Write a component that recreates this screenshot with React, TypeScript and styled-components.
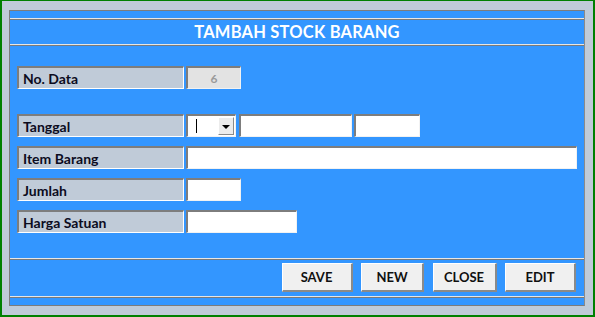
import React from 'react';
import styled, { createGlobalStyle } from 'styled-components';

const GlobalStyle = createGlobalStyle`
  html, body {
    margin: 0;
    padding: 0;
    background: #c0cbd8;
  }
  * {
    box-sizing: border-box;
  }
`;

const Window = styled.div`
  width: 595px;
  height: 317px;
  background-color: #c0cbd8;
  border: solid 2px #008000;
  border-top-width: 1px;
  padding: 9px 0 0 7px;
  font-family: Lato, 'Open Sans', sans-serif;
`;

const Panel = styled.div`
  width: 576px;
  height: 296px;
  display: flex;
  flex-direction: column;
  background-color: #3396ff;
  border: solid 1px #7c7c7c;
  border-right-color: #8a8a8a;
`;

const Strip = styled.div`
  height: 7px;
  flex: none;
`;

const Groove = styled.div`
  height: 2px;
  flex: none;
  border-top: solid 1px #e6e6e6;
  border-bottom: solid 1px #7a7a7a;
`;

const Title = styled.div`
  height: 24px;
  flex: none;
  display: flex;
  align-items: center;
  justify-content: center;
  color: #ffffff;
  font-size: 16.5px;
  font-weight: 700;
  letter-spacing: 0.2px;
`;

const Body = styled.div`
  flex: 1;
  padding: 20px 0 0 7px;
  display: flex;
  flex-direction: column;
  gap: 9px;
`;

const Row = styled.div<{ $spaceAfter?: number }>`
  display: flex;
  gap: 2px;
  height: 23px;
  margin-bottom: ${(props) => props.$spaceAfter ?? 0}px;
`;

const Label = styled.div`
  width: 167px;
  display: flex;
  align-items: center;
  padding-left: 4px;
  background-color: #c0cbd8;
  border-top: solid 2px #7d7d7d;
  border-left: solid 2px #7d7d7d;
  border-bottom: solid 1px #ffffff;
  border-right: solid 1px #ffffff;
  color: #0c0c1e;
  font-size: 14px;
  font-weight: 700;
`;

const Field = styled.div<{ $width: number; $disabled?: boolean; $gapBefore?: number }>`
  width: ${(props) => props.$width}px;
  margin-left: ${(props) => props.$gapBefore ?? 0}px;
  display: flex;
  align-items: center;
  justify-content: center;
  background-color: ${(props) => (props.$disabled ? '#e3e3e3' : '#ffffff')};
  border-top: solid 2px #7d7d7d;
  border-left: solid 2px #7d7d7d;
  border-bottom: solid 1px #f2f2f2;
  border-right: solid 1px #f2f2f2;
  color: #9a9a9a;
  font-size: 12px;
  font-weight: 700;
`;

const Combo = styled(Field)`
  justify-content: space-between;
  padding: 1px 1px 1px 8px;
`;

const Caret = styled.span`
  width: 1px;
  height: 14px;
  background-color: #000;
`;

const DropButton = styled.span`
  width: 16px;
  height: 100%;
  display: flex;
  align-items: center;
  justify-content: center;
  background-color: #ececec;
  border-top: solid 1px #ffffff;
  border-left: solid 1px #ffffff;
  border-bottom: solid 1px #8a8a8a;
  border-right: solid 1px #8a8a8a;

  &::after {
    content: '';
    border-left: solid 4px transparent;
    border-right: solid 4px transparent;
    border-top: solid 4px #000;
    margin-top: 1px;
  }
`;

const Footer = styled.div`
  height: 36px;
  flex: none;
  display: flex;
  justify-content: flex-end;
  gap: 8.5px;
  padding: 3px 8px 0 0;
`;

const Button = styled.button<{ $width: number }>`
  width: ${(props) => props.$width}px;
  height: 29px;
  padding: 0;
  background-color: #f0f0f0;
  border-top: solid 1px #ffffff;
  border-left: solid 1px #ffffff;
  border-bottom: solid 2px #8a8a8a;
  border-right: solid 2px #8a8a8a;
  font-family: Lato, 'Open Sans', sans-serif;
  font-size: 13px;
  font-weight: 700;
  color: #101010;
`;

const buttons = [
  { id: 'save', text: 'SAVE', width: 71 },
  { id: 'new', text: 'NEW', width: 63 },
  { id: 'close', text: 'CLOSE', width: 64 },
  { id: 'edit', text: 'EDIT', width: 71 },
];

export default function App() {
  return (
    <>
      <GlobalStyle />
      <Window>
        <Panel>
          <Strip />
          <Groove />
          <Title>TAMBAH STOCK BARANG</Title>
          <Groove />
          <Body>
            <Row $spaceAfter={16}>
              <Label>No. Data</Label>
              <Field $width={55} $disabled>
                6
              </Field>
            </Row>
            <Row>
              <Label>Tanggal</Label>
              <Combo $width={50}>
                <Caret />
                <DropButton />
              </Combo>
              <Field $width={113} $gapBefore={1} />
              <Field $width={66} />
            </Row>
            <Row>
              <Label>Item Barang</Label>
              <Field $width={391} />
            </Row>
            <Row>
              <Label>Jumlah</Label>
              <Field $width={55} />
            </Row>
            <Row>
              <Label>Harga Satuan</Label>
              <Field $width={111} />
            </Row>
          </Body>
          <Groove />
          <Footer>
            {buttons.map((button) => (
              <Button key={button.id} $width={button.width}>
                {button.text}
              </Button>
            ))}
          </Footer>
          <Groove />
          <Strip />
        </Panel>
      </Window>
    </>
  );
}
